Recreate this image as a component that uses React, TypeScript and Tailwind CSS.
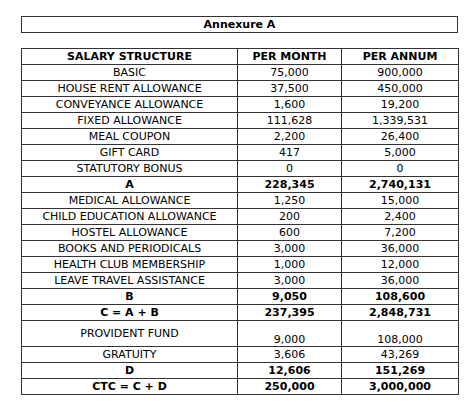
import React from "react";

type Row = { label: string; month: string; annum: string; bold?: boolean; tall?: boolean };

const rows: Row[] = [
  { label: "BASIC", month: "75,000", annum: "900,000" },
  { label: "HOUSE RENT ALLOWANCE", month: "37,500", annum: "450,000" },
  { label: "CONVEYANCE ALLOWANCE", month: "1,600", annum: "19,200" },
  { label: "FIXED ALLOWANCE", month: "111,628", annum: "1,339,531" },
  { label: "MEAL COUPON", month: "2,200", annum: "26,400" },
  { label: "GIFT CARD", month: "417", annum: "5,000" },
  { label: "STATUTORY BONUS", month: "0", annum: "0" },
  { label: "A", month: "228,345", annum: "2,740,131", bold: true },
  { label: "MEDICAL ALLOWANCE", month: "1,250", annum: "15,000" },
  { label: "CHILD EDUCATION ALLOWANCE", month: "200", annum: "2,400" },
  { label: "HOSTEL ALLOWANCE", month: "600", annum: "7,200" },
  { label: "BOOKS AND PERIODICALS", month: "3,000", annum: "36,000" },
  { label: "HEALTH CLUB MEMBERSHIP", month: "1,000", annum: "12,000" },
  { label: "LEAVE TRAVEL ASSISTANCE", month: "3,000", annum: "36,000" },
  { label: "B", month: "9,050", annum: "108,600", bold: true },
  { label: "C = A + B", month: "237,395", annum: "2,848,731", bold: true },
  { label: "PROVIDENT FUND", month: "9,000", annum: "108,000", tall: true },
  { label: "GRATUITY", month: "3,606", annum: "43,269" },
  { label: "D", month: "12,606", annum: "151,269", bold: true },
  { label: "CTC = C + D", month: "250,000", annum: "3,000,000", bold: true },
];

export default function App() {
  return (
    <div className="w-[474px] h-[412px] bg-white pt-[16px] pl-[21px] text-black text-[11px] font-['DejaVu_Sans',Verdana,sans-serif]">
      {/* title box */}
      <div className="w-[437px] h-[17px] border border-[#333] flex items-center justify-center font-bold leading-none">
        Annexure A
      </div>

      <table className="mt-[15px] w-[437px] border-collapse table-fixed">
        <colgroup>
          <col className="w-[216px]" />
          <col className="w-[104px]" />
          <col className="w-[117px]" />
        </colgroup>
        <thead>
          <tr className="h-[16px] font-bold">
            <th className="border border-[#333] p-0 leading-[15px] text-center">SALARY STRUCTURE</th>
            <th className="border border-[#333] p-0 leading-[15px] text-center">PER MONTH</th>
            <th className="border border-[#333] p-0 leading-[15px] text-center">PER ANNUM</th>
          </tr>
        </thead>
        <tbody>
          {rows.map((r) => (
            <tr key={r.label} className={`${r.tall ? "h-[26px]" : "h-[16px]"} ${r.bold ? "font-bold" : ""}`}>
              <td className="border border-[#333] p-0 leading-[15px] text-center align-middle">{r.label}</td>
              <td className={`border border-[#333] p-0 text-center ${r.tall ? "align-bottom leading-[13px]" : "align-middle leading-[15px]"}`}>
                {r.month}
              </td>
              <td className={`border border-[#333] p-0 text-center ${r.tall ? "align-bottom leading-[13px]" : "align-middle leading-[15px]"}`}>
                {r.annum}
              </td>
            </tr>
          ))}
        </tbody>
      </table>
    </div>
  );
}
